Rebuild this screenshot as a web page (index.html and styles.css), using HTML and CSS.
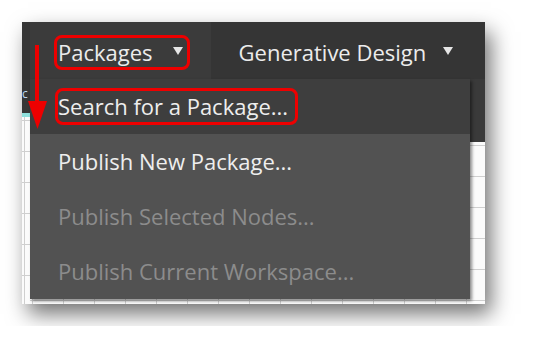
FILE: index.html
```html
<!DOCTYPE html>
<html lang="en">
<head>
    <meta charset="UTF-8">
    <title>Packages menu</title>
    <link rel="stylesheet" href="styles.css">
</head>
<body>

    <div class="shot">
        <!-- Top menu bar -->
        <div class="menu-bar">
            <div class="menu-item open">
                <span>Packages</span>
                <svg class="caret" width="10" height="8" viewBox="0 0 10 8"><polygon points="0,0 10,0 5,8" fill="#e6e6e6"/></svg>
            </div>
            <div class="menu-item">
                <span>Generative Design</span>
                <svg class="caret" width="10" height="8" viewBox="0 0 10 8"><polygon points="0,0 10,0 5,8" fill="#e6e6e6"/></svg>
            </div>
        </div>

        <!-- Workspace behind the menu -->
        <div class="workspace">
            <div class="side">
                <div class="side-head">c</div>
                <div class="side-line"></div>
                <div class="grid"></div>
            </div>
            <div class="main">
                <div class="main-head"></div>
                <div class="grid"></div>
            </div>
        </div>

        <!-- Dropdown -->
        <ul class="dropdown">
            <li class="hover">Search for a Package...</li>
            <li>Publish New Package...</li>
            <li class="disabled">Publish Selected Nodes...</li>
            <li class="disabled">Publish Current Workspace...</li>
        </ul>

        <!-- Annotations -->
        <div class="mark mark-packages"></div>
        <div class="mark mark-search"></div>
        <svg class="arrow" width="20" height="86" viewBox="0 0 20 86">
            <rect x="7" y="0" width="4" height="58" fill="#ee0000"/>
            <polygon points="0,56 19,56 9.5,84" fill="#ee0000"/>
        </svg>
    </div>

</body>
</html>
```

FILE: styles.css
```css
/* Reset */
* {
    margin: 0;
    padding: 0;
    box-sizing: border-box;
}

body {
    background: #ffffff;
    font-family: "Open Sans", "Noto Sans", sans-serif;
    padding: 22px;
}

/* Screenshot frame */
.shot {
    position: relative;
    width: 463px;
    height: 282px;
    background: #3a3a3a;
    box-shadow: 6px 10px 20px rgba(0, 0, 0, 0.55);
    display: flex;
    flex-direction: column;
}

/* Menu bar */
.menu-bar {
    height: 57px;
    background: #353535;
    display: flex;
    align-items: stretch;
    padding-left: 8px;
}

.menu-item {
    display: flex;
    align-items: center;
    gap: 17px;
    color: #ececec;
    font-size: 22px;
    padding: 0 28px;
}

.menu-item.open {
    background: #3b3b3b;
    gap: 20px;
}

.menu-item span {
    margin-top: 2px;
}

/* Workspace */
.workspace {
    flex: 1;
    display: flex;
    overflow: hidden;
}

.side {
    width: 8px;
    display: flex;
    flex-direction: column;
    overflow: hidden;
}

.side-head {
    height: 34px;
    background: #363636;
    color: #bcd8f0;
    font-size: 12px;
    line-height: 30px;
}

.side-line {
    height: 4px;
    background: #8fe0dc;
}

.main {
    flex: 1;
    display: flex;
    flex-direction: column;
}

.main-head {
    height: 63px;
    background: #3a3a3a;
}

.grid {
    flex: 1;
    background-color: #fbfbfb;
    background-image:
        linear-gradient(to right, #cfcfcf 1px, transparent 1px),
        linear-gradient(to bottom, #cfcfcf 1px, transparent 1px);
    background-size: 31px 31px;
    background-position: 2px 3px;
}

/* Dropdown menu */
.dropdown {
    position: absolute;
    left: 8px;
    top: 57px;
    width: 440px;
    list-style: none;
    background: #525252;
    box-shadow: 2px 2px 3px rgba(0, 0, 0, 0.45);
}

.dropdown li {
    height: 55px;
    line-height: 55px;
    padding-left: 28px;
    font-size: 22px;
    color: #eeeeee;
}

.dropdown li.hover {
    background: #3e3e3e;
}

.dropdown li.disabled {
    color: #8c8c8c;
}

/* Red annotations */
.mark {
    position: absolute;
    border: 3px solid #ee0000;
    border-radius: 8px;
}

.mark-packages {
    left: 32px;
    top: 13px;
    width: 136px;
    height: 35px;
}

.mark-search {
    left: 33px;
    top: 66px;
    width: 243px;
    height: 37px;
}

.arrow {
    position: absolute;
    left: 6px;
    top: 23px;
}
```
